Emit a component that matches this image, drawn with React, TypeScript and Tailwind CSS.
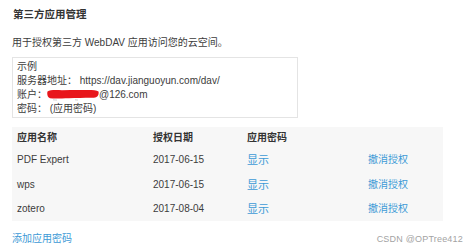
import React from "react";

const rows = [
  { name: "PDF Expert", date: "2017-06-15", h: "h-[24px]" },
  { name: "wps", date: "2017-06-15", h: "h-[25px]" },
  { name: "zotero", date: "2017-08-04", h: "h-[24px]" },
];

export default function App() {
  return (
    <div
      className="w-[474px] h-[252px] bg-white pl-[12px] pr-[11px] pt-[7px] text-[10px] leading-[14px] text-[#3c3c3c] overflow-hidden"
      style={{ fontFamily: '"Liberation Sans", "Noto Sans CJK SC", sans-serif' }}
    >
      <div className="pl-[1px] text-[10.5px] font-bold text-[#333]">第三方应用管理</div>
      <div className="mt-[15px]">用于授权第三方 WebDAV 应用访问您的云空间。</div>
      <div className="mt-[7px] w-[286px] border border-[#e4e4e4] pl-[4px] pt-[2px] pb-[1px]">
        <div>示例</div>
        <div>服务器地址： https://dav.jianguoyun.com/dav/</div>
        <div className="flex items-center">
          <span>账户：</span>
          <svg width="52" height="14" viewBox="0 0 52 14" className="block">
            <path
              d="M0.5 3.5 C3 1.8 9 2 15 2.3 C23 2 31 1.8 39 2 C45 1.9 49.5 2.2 51.5 3.6 C52.2 6.5 50.8 9.6 47 9.8 C40 9.6 30 10.2 22 10.2 C14 10.4 7 10.8 3 10.2 C0.5 9.4 -0.2 6 0.5 3.5 Z"
              fill="#e8161b"
            />
            <path d="M6 11.8 L10 12.1 M28 11.8 L31 12.1" stroke="#bbb" strokeWidth="0.7" />
          </svg>
          <span>@126.com</span>
        </div>
        <div>密码： (应用密码)</div>
      </div>
      <div className="mt-[9px] w-[431px] bg-[#f7f7f7]">
        <div className="grid grid-cols-[136px_94px_121px_1fr] pl-[5px] h-[21px] items-center font-bold text-[#333]">
          <span>应用名称</span>
          <span>授权日期</span>
          <span>应用密码</span>
          <span></span>
        </div>
        {rows.map((r) => (
          <div
            key={r.name}
            className={`grid grid-cols-[136px_94px_121px_1fr] pl-[5px] ${r.h} items-center`}
          >
            <span>{r.name}</span>
            <span>{r.date}</span>
            <span className="text-[#3d9ad6] text-[11px]">显示</span>
            <span className="text-[#3d9ad6]">撤消授权</span>
          </div>
        ))}
      </div>
      <div className="mt-[11px] flex items-center justify-between">
        <span className="text-[#3d9ad6]">添加应用密码</span>
        <span className="text-[9px] text-[#a3a3a3] tracking-[0.2px]">CSDN @OPTree412</span>
      </div>
    </div>
  );
}
